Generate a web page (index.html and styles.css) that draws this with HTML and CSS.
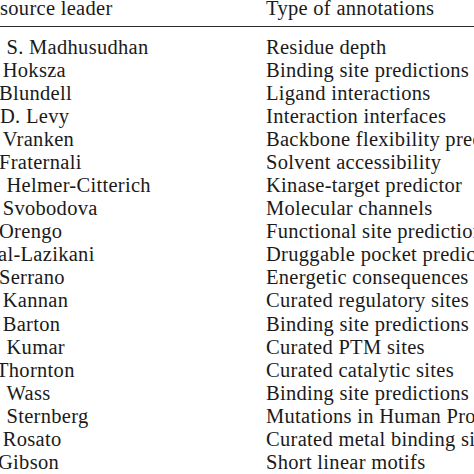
FILE: index.html
```html
<!DOCTYPE html>
<html>
<head>
<meta charset="utf-8">
<link rel="stylesheet" href="styles.css">
</head>
<body>
<div class="sheet">
  <div class="row head">
    <div class="lead flush">source leader</div>
    <div class="kind">Type of annotations</div>
  </div>
  <div class="body">
    <div class="row"><div class="lead deep">S. Madhusudhan</div><div class="kind">Residue depth</div></div>
    <div class="row"><div class="lead mid">Hoksza</div><div class="kind">Binding site predictions</div></div>
    <div class="row"><div class="lead cut1">Blundell</div><div class="kind">Ligand interactions</div></div>
    <div class="row"><div class="lead flush">D. Levy</div><div class="kind">Interaction interfaces</div></div>
    <div class="row"><div class="lead mid">Vranken</div><div class="kind">Backbone flexibility predictions</div></div>
    <div class="row"><div class="lead cut1">Fraternali</div><div class="kind">Solvent accessibility</div></div>
    <div class="row"><div class="lead deep">Helmer-Citterich</div><div class="kind">Kinase-target predictor</div></div>
    <div class="row"><div class="lead mid">Svobodova</div><div class="kind">Molecular channels</div></div>
    <div class="row"><div class="lead cut1">Orengo</div><div class="kind">Functional site predictions</div></div>
    <div class="row"><div class="lead cut2">al-Lazikani</div><div class="kind">Druggable pocket predictions</div></div>
    <div class="row"><div class="lead cut1">Serrano</div><div class="kind">Energetic consequences</div></div>
    <div class="row"><div class="lead mid">Kannan</div><div class="kind">Curated regulatory sites</div></div>
    <div class="row"><div class="lead mid">Barton</div><div class="kind">Binding site predictions</div></div>
    <div class="row"><div class="lead deep">Kumar</div><div class="kind">Curated PTM sites</div></div>
    <div class="row"><div class="lead cut4">Thornton</div><div class="kind">Curated catalytic sites</div></div>
    <div class="row"><div class="lead deep">Wass</div><div class="kind">Binding site predictions</div></div>
    <div class="row"><div class="lead deep">Sternberg</div><div class="kind">Mutations in Human Proteins</div></div>
    <div class="row"><div class="lead mid">Rosato</div><div class="kind">Curated metal binding sites</div></div>
    <div class="row"><div class="lead cut2">Gibson</div><div class="kind">Short linear motifs</div></div>
  </div>
</div>
</body>
</html>
```

FILE: styles.css
```css
html, body {
  margin: 0;
  padding: 0;
  background: #ffffff;
}
.sheet {
  width: 474px;
  height: 474px;
  overflow: hidden;
  font-family: "Liberation Serif", "Times New Roman", serif;
  font-size: 20.5px;
  letter-spacing: 0.3px;
  line-height: 23.05px;
  color: #1a1a1a;
}
.row {
  display: grid;
  grid-template-columns: 266px 208px;
  white-space: nowrap;
}
.lead, .kind {
  overflow: hidden;
}
.head {
  margin-top: -3.3px;
  padding-bottom: 6px;
  border-bottom: 1.5px solid #2a2a2a;
}
.body {
  padding-top: 9.2px;
}
.flush { text-indent: 0; }
.deep { text-indent: 6.5px; }
.mid { text-indent: 2.7px; }
.cut1 { text-indent: -1px; }
.cut2 { text-indent: -2px; }
.cut4 { text-indent: -4px; }
```
